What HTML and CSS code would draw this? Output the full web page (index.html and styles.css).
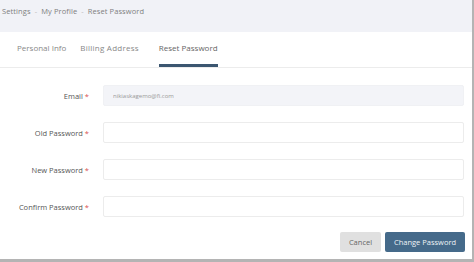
FILE: index.html
```html
<!DOCTYPE html>
<html lang="en">
<head>
    <meta charset="UTF-8">
    <meta name="viewport" content="width=device-width, initial-scale=1.0">
    <title>Reset Password</title>

    <link rel="stylesheet" href="styles.css">
</head>
<body>
    <div class="page">
        <nav class="breadcrumb">
            <span>Settings</span>
            <span class="sep">-</span>
            <span>My Profile</span>
            <span class="sep">-</span>
            <span>Reset Password</span>
        </nav>

        <main class="card">
            <div class="tabs">
                <div class="tab">Personal Info</div>
                <div class="tab">Billing Address</div>
                <div class="tab active">Reset Password</div>
            </div>

            <form class="form">
                <div class="row">
                    <label>Email <span class="req">*</span></label>
                    <input type="text" class="readonly" value="nikiaskagemo@fi.com" readonly>
                </div>
                <div class="row">
                    <label>Old Password <span class="req">*</span></label>
                    <input type="password">
                </div>
                <div class="row">
                    <label>New Password <span class="req">*</span></label>
                    <input type="password">
                </div>
                <div class="row">
                    <label>Confirm Password <span class="req">*</span></label>
                    <input type="password">
                </div>

                <div class="actions">
                    <button type="button" class="btn btn-cancel">Cancel</button>
                    <button type="button" class="btn btn-primary">Change Password</button>
                </div>
            </form>
        </main>
    </div>
</body>
</html>
```

FILE: styles.css
```css
/* Basic Reset */
* {
    margin: 0;
    padding: 0;
    box-sizing: border-box;
    font-family: "Open Sans", Arial, sans-serif;
}

body {
    background-color: #b4b4b4;
    color: #555;
    font-size: 8px;
}

.page {
    width: 472px;
    height: 259px;
    background: #fff;
    display: flex;
    flex-direction: column;
}

/* Breadcrumb */
.breadcrumb {
    height: 32px;
    padding: 6px 2px 0;
    background: #f1f2f7;
    color: #808080;
    font-size: 7.5px;
    letter-spacing: 0.1px;
    display: flex;
    gap: 4px;
}

.breadcrumb .sep {
    color: #bbb;
}

/* Tabs */
.card {
    flex: 1;
    background: #fff;
}

.tabs {
    display: flex;
    height: 36px;
    padding-left: 17px;
    border-bottom: 1px solid #ececec;
}

.tab {
    display: flex;
    align-items: center;
    margin-right: 14px;
    padding-bottom: 2px;
    color: #888;
    font-size: 8px;
    border-bottom: 3px solid transparent;
}

.tab:nth-child(2) {
    letter-spacing: 0.25px;
    margin-right: 20px;
}

.tab.active {
    color: #666;
    border-bottom-color: #3b5670;
}

/* Form */
.form {
    padding: 17px 8px 0 0;
}

.row {
    display: flex;
    align-items: center;
    margin-bottom: 16px;
}

.row label {
    width: 89px;
    margin-right: 14px;
    text-align: right;
    color: #555;
    font-size: 7.5px;
}

.req {
    color: #d9534f;
}

.row input {
    flex: 1;
    height: 21px;
    padding: 0 9px;
    border: 1px solid #ececec;
    border-radius: 2px;
    background: #fff;
    color: #999;
    font-size: 6px;
    outline: none;
}

.row input.readonly {
    background: #f3f4f8;
    border-color: #f0f1f4;
}

.actions {
    display: flex;
    justify-content: flex-end;
    gap: 4px;
    margin-top: -1px;
    margin-right: -1px;
}

.btn {
    height: 20px;
    border: none;
    border-radius: 2px;
    font-size: 7.5px;
    cursor: pointer;
}

.btn-cancel {
    width: 41px;
    background: #e0e0e0;
    color: #666;
}

.btn-primary {
    width: 80px;
    background: #456a8a;
    color: #eef3f7;
}
```
